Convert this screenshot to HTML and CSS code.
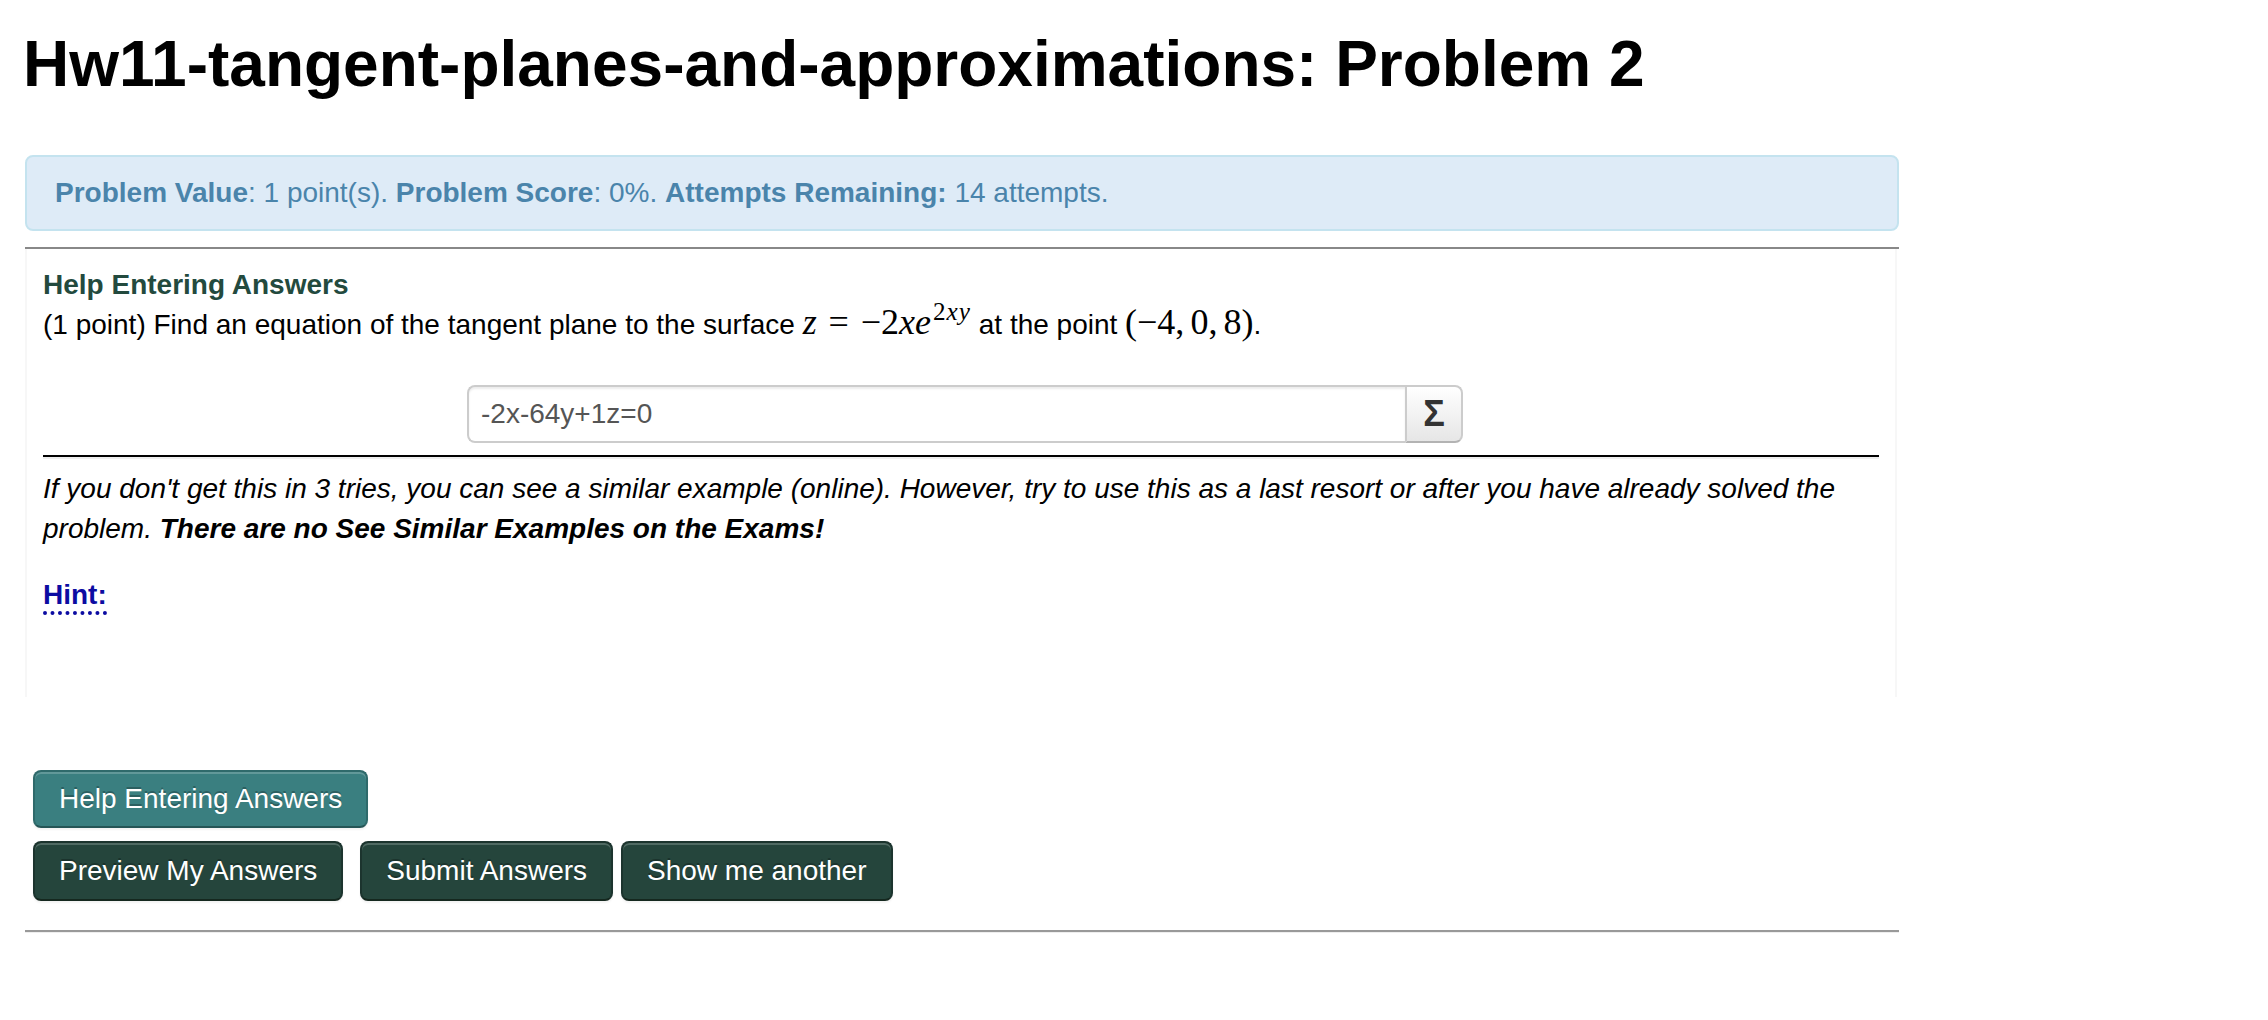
FILE: index.html
```html
<!DOCTYPE html>
<html>
  <head>
    <title>Hw11-tangent-planes-and-approximations: Problem 2</title>
    <meta charset="utf-8">
    <link rel="stylesheet" href="styles.css">
  </head>
  <body>
    <div class="container">
      <h1 class="problem-title">Hw11-tangent-planes-and-approximations: Problem 2</h1>

      <div class="alert-info">
        <b>Problem Value</b>: 1 point(s). <b>Problem Score</b>: 0%. <b>Attempts Remaining:</b> 14 attempts.
      </div>

      <hr class="gray-rule">

      <div class="problem">
        <div class="help-link">Help Entering Answers</div>
        <div class="problem-text">(1 point) Find an equation of the tangent plane to the surface <span class="math"><i>z</i><span class="rel">=</span>&minus;2<i>x</i><i>e</i><sup>2<i>x</i><i>y</i></sup></span> at the point <span class="math">(&minus;4,<span class="thin"></span>0,<span class="thin"></span>8)</span>.</div>

        <div class="answer-row">
          <div class="answer-group">
            <input class="answer" type="text" value="-2x-64y+1z=0">
            <button class="eqn-btn">&Sigma;</button>
          </div>
        </div>

        <hr class="black-rule">

        <p class="similar"><i>If you don't get this in 3 tries, you can see a similar example (online). However, try to use this as a last resort or after you have already solved the problem. <b>There are no See Similar Examples on the Exams!</b></i></p>

        <div class="hint"><span>Hint:</span></div>
      </div>

      <div class="buttons">
        <div class="btn-row">
          <button class="btn btn-help">Help Entering Answers</button>
        </div>
        <div class="btn-row second">
          <button class="btn btn-dark preview">Preview My Answers</button>
          <button class="btn btn-dark submit">Submit Answers</button>
          <button class="btn btn-dark">Show me another</button>
        </div>
      </div>

      <hr class="gray-rule bottom">
    </div>
  </body>
</html>
```

FILE: styles.css
```css
* {
  font-family: "Liberation Sans", Arial, sans-serif;
}

body {
  margin: 0;
  background-color: #fff;
  color: #000;
}

.container {
  width: 1874px;
  margin-left: 25px;
}

.problem-title {
  font-size: 64px;
  line-height: 80px;
  font-weight: bold;
  margin: 24px 0 51px -2px;
}

.alert-info {
  background-color: #deebf7;
  border: 2px solid #c4e3ef;
  border-radius: 8px;
  color: #4a84ab;
  font-size: 28px;
  line-height: 40px;
  padding: 16px 28px;
}

.gray-rule {
  border: 0;
  border-top: 2px solid #888;
  margin: 16px 0 0;
}

.problem {
  width: 1872px;
  box-sizing: border-box;
  border-left: 2px solid #f7f7f7;
  border-right: 2px solid #f7f7f7;
  padding: 16px;
  font-size: 28px;
  line-height: 40px;
}

.help-link {
  font-weight: bold;
  color: #234a3e;
}

.math, .math * {
  font-family: "Liberation Serif", "Times New Roman", serif;
}

.math {
  font-size: 36px;
  line-height: 0;
}

.rel {
  padding: 0 0.33em;
}

.math sup {
  font-size: 0.7em;
  line-height: 0;
  margin-left: 2px;
  letter-spacing: 1px;
  vertical-align: 0.55em;
}

.thin {
  display: inline-block;
  width: 0.167em;
}

.answer-row {
  display: flex;
  justify-content: center;
  padding-left: 8px;
  margin-top: 40px;
}

.answer-group {
  display: flex;
}

.answer {
  width: 938px;
  height: 58px;
  box-sizing: border-box;
  border: 2px solid #ccc;
  border-right: 0;
  border-radius: 8px 0 0 8px;
  padding: 0 12px;
  font-size: 28px;
  color: #555;
  box-shadow: inset 0 2px 2px rgba(0, 0, 0, 0.075);
  outline: none;
}

.eqn-btn {
  width: 58px;
  height: 58px;
  border: 2px solid #ccc;
  border-bottom-color: #b3b3b3;
  border-radius: 0 8px 8px 0;
  background: linear-gradient(#fff, #e6e6e6);
  padding: 0;
  font-size: 36px;
  font-weight: bold;
  color: #333;
}

.black-rule {
  border: 0;
  border-top: 2px solid #000;
  border-bottom: 2px solid #eee;
  margin: 12px 0 0;
}

.similar {
  margin: 10px 0 0;
}

.hint {
  font-weight: bold;
  margin: 26px 0 66px;
}

.hint span {
  color: #0c0ca2;
  padding-bottom: 1px;
  border-bottom: 4px dotted #0c0ca2;
}

.buttons {
  padding-left: 8px;
  margin-top: 73px;
}

.btn-row {
  display: flex;
}

.btn-row + .btn-row {
  margin-top: 13px;
}

.btn {
  height: 58px;
  padding: 0 24px;
  border: 2px solid;
  border-radius: 8px;
  font-size: 28px;
  color: #fff;
  text-shadow: 0 -2px 0 rgba(0, 0, 0, 0.25);
  box-shadow: inset 0 2px 0 rgba(255, 255, 255, 0.2), 0 2px 2px rgba(0, 0, 0, 0.05);
}

.second .btn {
  height: 60px;
}

.btn-help {
  background-color: #3a7f80;
  border-color: #2f6a6b #2f6a6b #255556;
}

.btn-dark {
  background-color: #25453c;
  border-color: #1c342e #1c342e #15281f;
}

.preview {
  margin-right: 17px;
}

.submit {
  margin-right: 8px;
}

.bottom {
  margin-top: 29px;
  border-top-color: #999;
  border-bottom: 1px solid #eee;
}
```
